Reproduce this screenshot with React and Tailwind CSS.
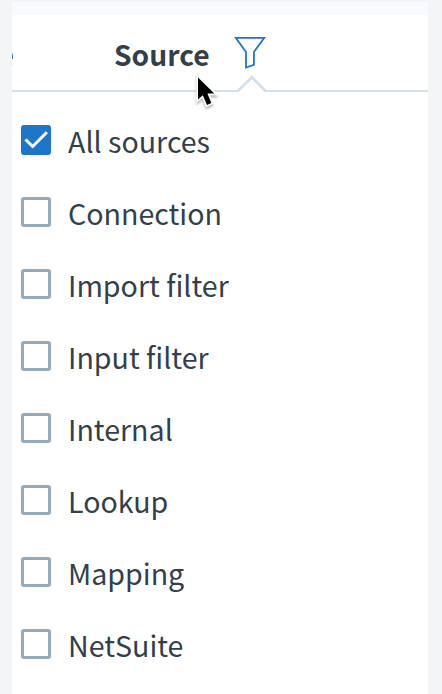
import React, { useState } from "react";

const sources = [
  "All sources",
  "Connection",
  "Import filter",
  "Input filter",
  "Internal",
  "Lookup",
  "Mapping",
  "NetSuite",
];

const FilterIcon = () => (
  <svg width="32" height="34" viewBox="0 0 32 34" fill="none" className="block">
    <path
      d="M1.7 1.9H30.3L19.9 16V28.8L12 31.6V16Z"
      stroke="#1d76c7"
      strokeWidth="1.8"
    />
  </svg>
);

const Cursor = () => (
  <svg
    width="30"
    height="42"
    viewBox="0 0 30 42"
    className="pointer-events-none absolute left-[192px] top-[70px] drop-shadow-[0_2px_1px_rgba(0,0,0,0.3)]"
  >
    <path
      d="M6 7.5V29.5L10.8 25.2L15 35L19.4 33L15.4 23.6H22.3Z"
      fill="#000"
      stroke="#fff"
      strokeWidth="3.4"
      paintOrder="stroke"
    />
  </svg>
);

// Header border with the notch that points at the filter icon
const HeaderLine = () => (
  <div className="flex h-[18px] items-end">
    <div className="h-[2px] w-[225px] bg-[#d2e1ea]" />
    <svg width="30" height="18" viewBox="0 0 30 18" fill="none" className="block">
      <path d="M0 17H1L14.8 3.2L28.5 17H30" stroke="#d2e1ea" strokeWidth="2.8" />
    </svg>
    <div className="h-[2px] flex-1 bg-[#d2e1ea]" />
  </div>
);

const SourceOption = ({ label, checked, onChange }) => (
  <label className="flex h-[72px] cursor-pointer items-start">
    <input type="checkbox" checked={checked} onChange={onChange} className="sr-only" />
    <span
      className={
        checked
          ? "flex size-[30px] rounded-[3px] bg-[#1d76c7]"
          : "flex size-[30px] rounded-[3px] border-[3px] border-[#95abbc] bg-white"
      }
    >
      {checked && (
        <svg width="30" height="30" viewBox="0 0 30 30" fill="none">
          <path d="M4.5 14.5L11.7 21.5L25.8 7.3" stroke="#fff" strokeWidth="3" />
        </svg>
      )}
    </span>
    <span className="ml-[17px] mt-[-4px] whitespace-nowrap text-[28.6px] leading-[40px]">
      {label}
    </span>
  </label>
);

const App = () => {
  const [selected, setSelected] = useState("All sources");

  return (
    <div className="relative h-[694px] w-[442px] overflow-hidden bg-[#f4f5f7] pl-3 pr-3.5 pt-[2px] font-['Noto_Sans_CJK_SC',sans-serif] text-[#333f4a]">
      <div className="h-[13px] bg-[#f9faff]" />
      <div className="h-[679px] bg-white">
        <div className="flex h-[59px] items-start">
          {/* end of the previous column title, scrolled out of the panel */}
          <div className="mt-[19px] flex w-px justify-end overflow-hidden text-[28px] font-bold leading-[40px]">
            <span className="-mr-px">e</span>
          </div>
          <div className="ml-[101px] mt-[19px] w-[120px] text-[28.2px] font-bold leading-[40px]">
            Source
          </div>
          <div className="mt-[21px]">
            <FilterIcon />
          </div>
        </div>
        <HeaderLine />
        <div className="pl-[9px] pt-[33px]">
          {sources.map((name) => (
            <SourceOption
              key={name}
              label={name}
              checked={selected === name}
              onChange={() => setSelected(name)}
            />
          ))}
        </div>
      </div>
      <Cursor />
    </div>
  );
};

export default App;
